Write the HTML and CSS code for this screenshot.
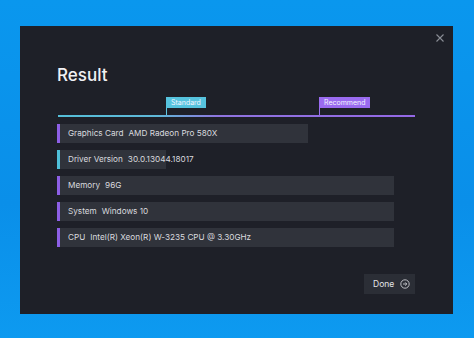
FILE: index.html
```html
<!DOCTYPE html>
<html lang="en">
<head>
  <meta charset="UTF-8" />
  <meta name="viewport" content="width=device-width, initial-scale=1.0"/>
  <title>Result</title>
  <link rel="stylesheet" href="styles.css">
</head>
<body>

  <div class="dialog">
    <button class="close-btn" aria-label="Close">
      <svg width="8" height="8" viewBox="0 0 8 8"><path d="M0.5 0.5 L7.5 7.5 M7.5 0.5 L0.5 7.5" stroke="#8b8e96" stroke-width="1.1" fill="none"/></svg>
    </button>

    <h1 class="title">Result</h1>

    <!-- level scale -->
    <div class="scale">
      <div class="marker marker-standard">
        <span class="tag">Standard</span>
      </div>
      <div class="marker marker-recommend">
        <span class="tag">Recommend</span>
      </div>
      <div class="scale-line"></div>
    </div>

    <div class="specs">
      <div class="spec spec-purple" style="width:251px;"><span class="label">Graphics Card</span>AMD Radeon Pro 580X</div>
      <div class="spec spec-cyan" style="width:109px;"><span class="label">Driver Version</span>30.0.13044.18017</div>
      <div class="spec spec-purple" style="width:337px;"><span class="label">Memory</span>96G</div>
      <div class="spec spec-purple" style="width:337px;"><span class="label">System</span>Windows 10</div>
      <div class="spec spec-purple" style="width:337px;"><span class="label">CPU</span>Intel(R) Xeon(R) W-3235 CPU @ 3.30GHz</div>
    </div>

    <div class="footer">
      <button class="done-btn">
        Done
        <svg width="10" height="10" viewBox="0 0 10 10"><circle cx="5" cy="5" r="4.2" stroke="#c9cbd0" stroke-width="0.9" fill="none"/><path d="M3 5 H6.8 M5.2 3.4 L6.8 5 L5.2 6.6" stroke="#c9cbd0" stroke-width="0.9" fill="none"/></svg>
      </button>
    </div>
  </div>

</body>
</html>
```

FILE: styles.css
```css
body {
  margin: 0;
  width: 474px;
  height: 338px;
  background: linear-gradient(180deg, #0a97ee 0%, #0a8fe9 60%, #0d9af0 100%);
  font-family: Inter, 'Noto Sans', sans-serif;
  overflow: hidden;
}

.dialog {
  position: relative;
  box-sizing: border-box;
  margin: 26px 0 0 20px;
  width: 433px;
  height: 288px;
  padding: 38px 38px 0 37px;
  background: #1e2028;
}

.close-btn {
  position: absolute;
  top: 8px;
  right: 9px;
  padding: 0;
  border: none;
  background: none;
  line-height: 0;
  cursor: pointer;
}

.title {
  margin: 0;
  font-size: 17px;
  font-weight: 500;
  line-height: 22px;
  color: #f0f1f3;
}

.scale {
  position: relative;
  margin-top: 11px;
  margin-left: 1px;
  width: 357px;
  height: 20px;
}

.scale-line {
  position: absolute;
  left: 0;
  right: 0;
  bottom: 0;
  height: 2px;
  background: linear-gradient(90deg, #55bfd9 0%, #5fb8d8 28%, #8f74e0 45%, #9468e6 100%);
}

.marker {
  position: absolute;
  top: 0;
  height: 19px;
  border-left: 1px solid;
}

.marker-standard {
  left: 108px;
  border-color: #5fc6e0;
}

.marker-recommend {
  left: 261px;
  border-color: #9a70ee;
}

.tag {
  display: block;
  margin-left: -1px;
  height: 11px;
  padding: 0 5px;
  font-size: 7px;
  line-height: 11px;
  color: #f4f5ff;
  white-space: nowrap;
}

.marker-standard .tag {
  background: #56c3de;
}

.marker-recommend .tag {
  background: #9a6bf0;
}

.specs {
  display: flex;
  flex-direction: column;
  gap: 7px;
  margin-top: 7px;
}

.spec {
  box-sizing: border-box;
  height: 19px;
  padding-left: 8px;
  border-left: 3px solid;
  background: #30333b;
  font-size: 8.2px;
  line-height: 19px;
  color: #d9dadf;
  white-space: nowrap;
}

.spec-purple {
  border-color: #8d5fe6;
}

.spec-cyan {
  border-color: #4fbfd9;
}

.label {
  margin-right: 5px;
}

.footer {
  display: flex;
  justify-content: flex-end;
  margin-top: 27px;
}

.done-btn {
  display: flex;
  align-items: center;
  gap: 6px;
  width: 51px;
  height: 20px;
  padding: 0 0 0 9px;
  border: none;
  background: #2b2e36;
  font-family: Inter, 'Noto Sans', sans-serif;
  font-size: 8.5px;
  color: #e2e3e7;
  cursor: pointer;
}
```
